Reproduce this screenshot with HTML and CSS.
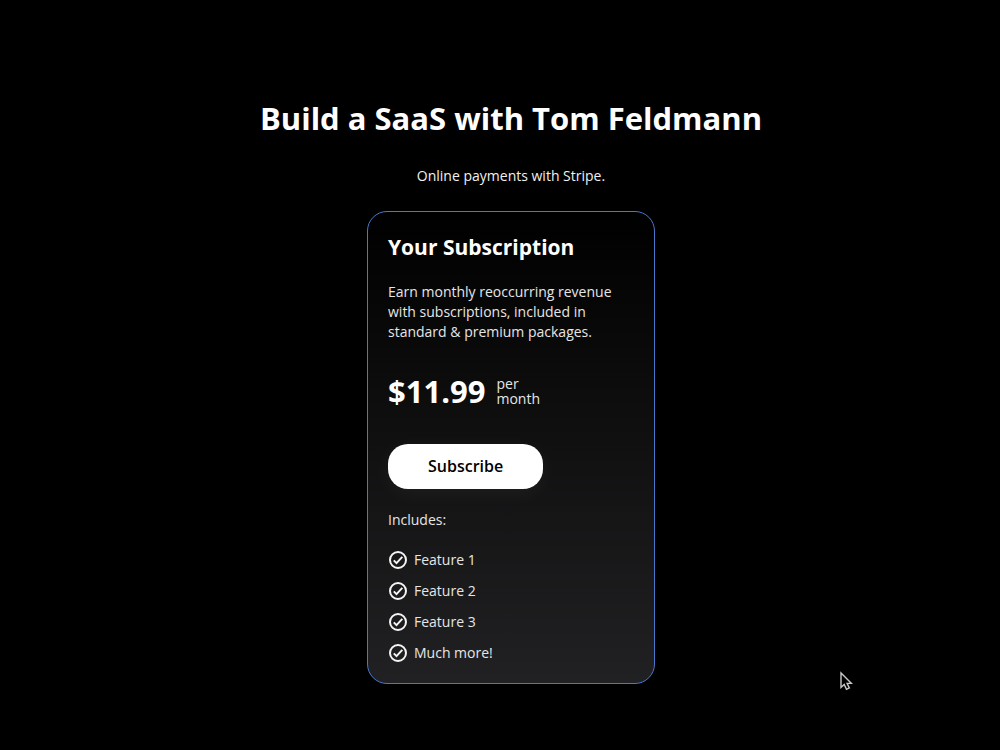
FILE: index.html
```html
<!DOCTYPE html>
<html lang="en">
<head>
  <meta charset="UTF-8">
  <meta name="viewport" content="width=device-width, initial-scale=1.0">
  <title>Build a SaaS with Tom Feldmann</title>
  <link rel="stylesheet" href="styles.css">
</head>
<body>
  <main class="page">
    <h1>Build a SaaS with Tom Feldmann</h1>
    <p class="tagline">Online payments with Stripe.</p>

    <section class="card">
      <h2>Your Subscription</h2>
      <p class="description">Earn monthly reoccurring revenue with subscriptions, included in standard &amp; premium packages.</p>

      <div class="price">
        <span class="amount">$11.99</span>
        <span class="period">per<br>month</span>
      </div>

      <button type="button" class="subscribe">Subscribe</button>

      <p class="includes">Includes:</p>
      <ul class="features">
        <li><svg class="check" viewBox="0 0 20 20"><circle cx="10" cy="10" r="8"/><path d="M5.8 10.4l2.7 2.7 5.8-6.2"/></svg>Feature 1</li>
        <li><svg class="check" viewBox="0 0 20 20"><circle cx="10" cy="10" r="8"/><path d="M5.8 10.4l2.7 2.7 5.8-6.2"/></svg>Feature 2</li>
        <li><svg class="check" viewBox="0 0 20 20"><circle cx="10" cy="10" r="8"/><path d="M5.8 10.4l2.7 2.7 5.8-6.2"/></svg>Feature 3</li>
        <li><svg class="check" viewBox="0 0 20 20"><circle cx="10" cy="10" r="8"/><path d="M5.8 10.4l2.7 2.7 5.8-6.2"/></svg>Much more!</li>
      </ul>
    </section>
  </main>

  <!-- Mouse pointer -->
  <svg class="pointer" viewBox="0 0 14 20"><path d="M2 2v14.5l3.2-3 2.3 4.8 2.8-1.3-2.2-4.6h4.4z"/></svg>
</body>
</html>
```

FILE: styles.css
```css
* {
  box-sizing: border-box;
}
body {
  margin: 0;
  min-height: 100vh;
  background-color: #000;
  color: #fff;
  font-family: "Open Sans", sans-serif;
  font-size: 14px;
  line-height: 20px;
}
h1, h2, p, ul {
  margin: 0;
  padding: 0;
}
.page {
  display: flex;
  flex-direction: column;
  align-items: center;
  padding: 98px 0 66px 22px;
}
h1 {
  font-size: 31px;
  line-height: 40px;
  text-align: center;
}
.tagline {
  margin: 28px 0 25px;
  color: #f0f0f0;
}
.card {
  width: 288px;
  max-width: 100%;
  padding: 20px;
  border: 1px solid #4878cc;
  border-radius: 20px;
  background: linear-gradient(#000, #212123);
}
h2 {
  font-size: 21px;
  line-height: 30px;
}
.description {
  margin-top: 20px;
  color: #e6e6e6;
}
.price {
  display: flex;
  align-items: center;
  gap: 11px;
  margin-top: 28px;
}
.amount {
  font-size: 31px;
  font-weight: 700;
  line-height: 42px;
}
.period {
  color: #e6e6e6;
  line-height: 15px;
}
.subscribe {
  display: block;
  margin-top: 32px;
  padding: 12px 40px;
  border: none;
  border-radius: 20px;
  background-color: #fff;
  box-shadow: 0 4px 20px rgba(255, 255, 255, 0.05);
  color: #000;
  font-family: inherit;
  font-size: 16px;
  font-weight: 600;
  line-height: 21px;
  cursor: pointer;
}
.includes {
  margin-top: 21px;
  color: #e6e6e6;
}
.features {
  display: grid;
  gap: 11px;
  margin-top: 20px;
  color: #e6e6e6;
  list-style: none;
}
.features li {
  display: flex;
  align-items: center;
  gap: 6px;
}
.check {
  width: 20px;
  height: 20px;
  fill: none;
  stroke: #f4f4f4;
  stroke-width: 2;
}
.pointer {
  position: absolute;
  right: 147px;
  bottom: 59px;
  width: 14px;
  height: 20px;
  fill: #000;
  stroke: #c8c8c8;
  stroke-width: 1.4;
}
```
